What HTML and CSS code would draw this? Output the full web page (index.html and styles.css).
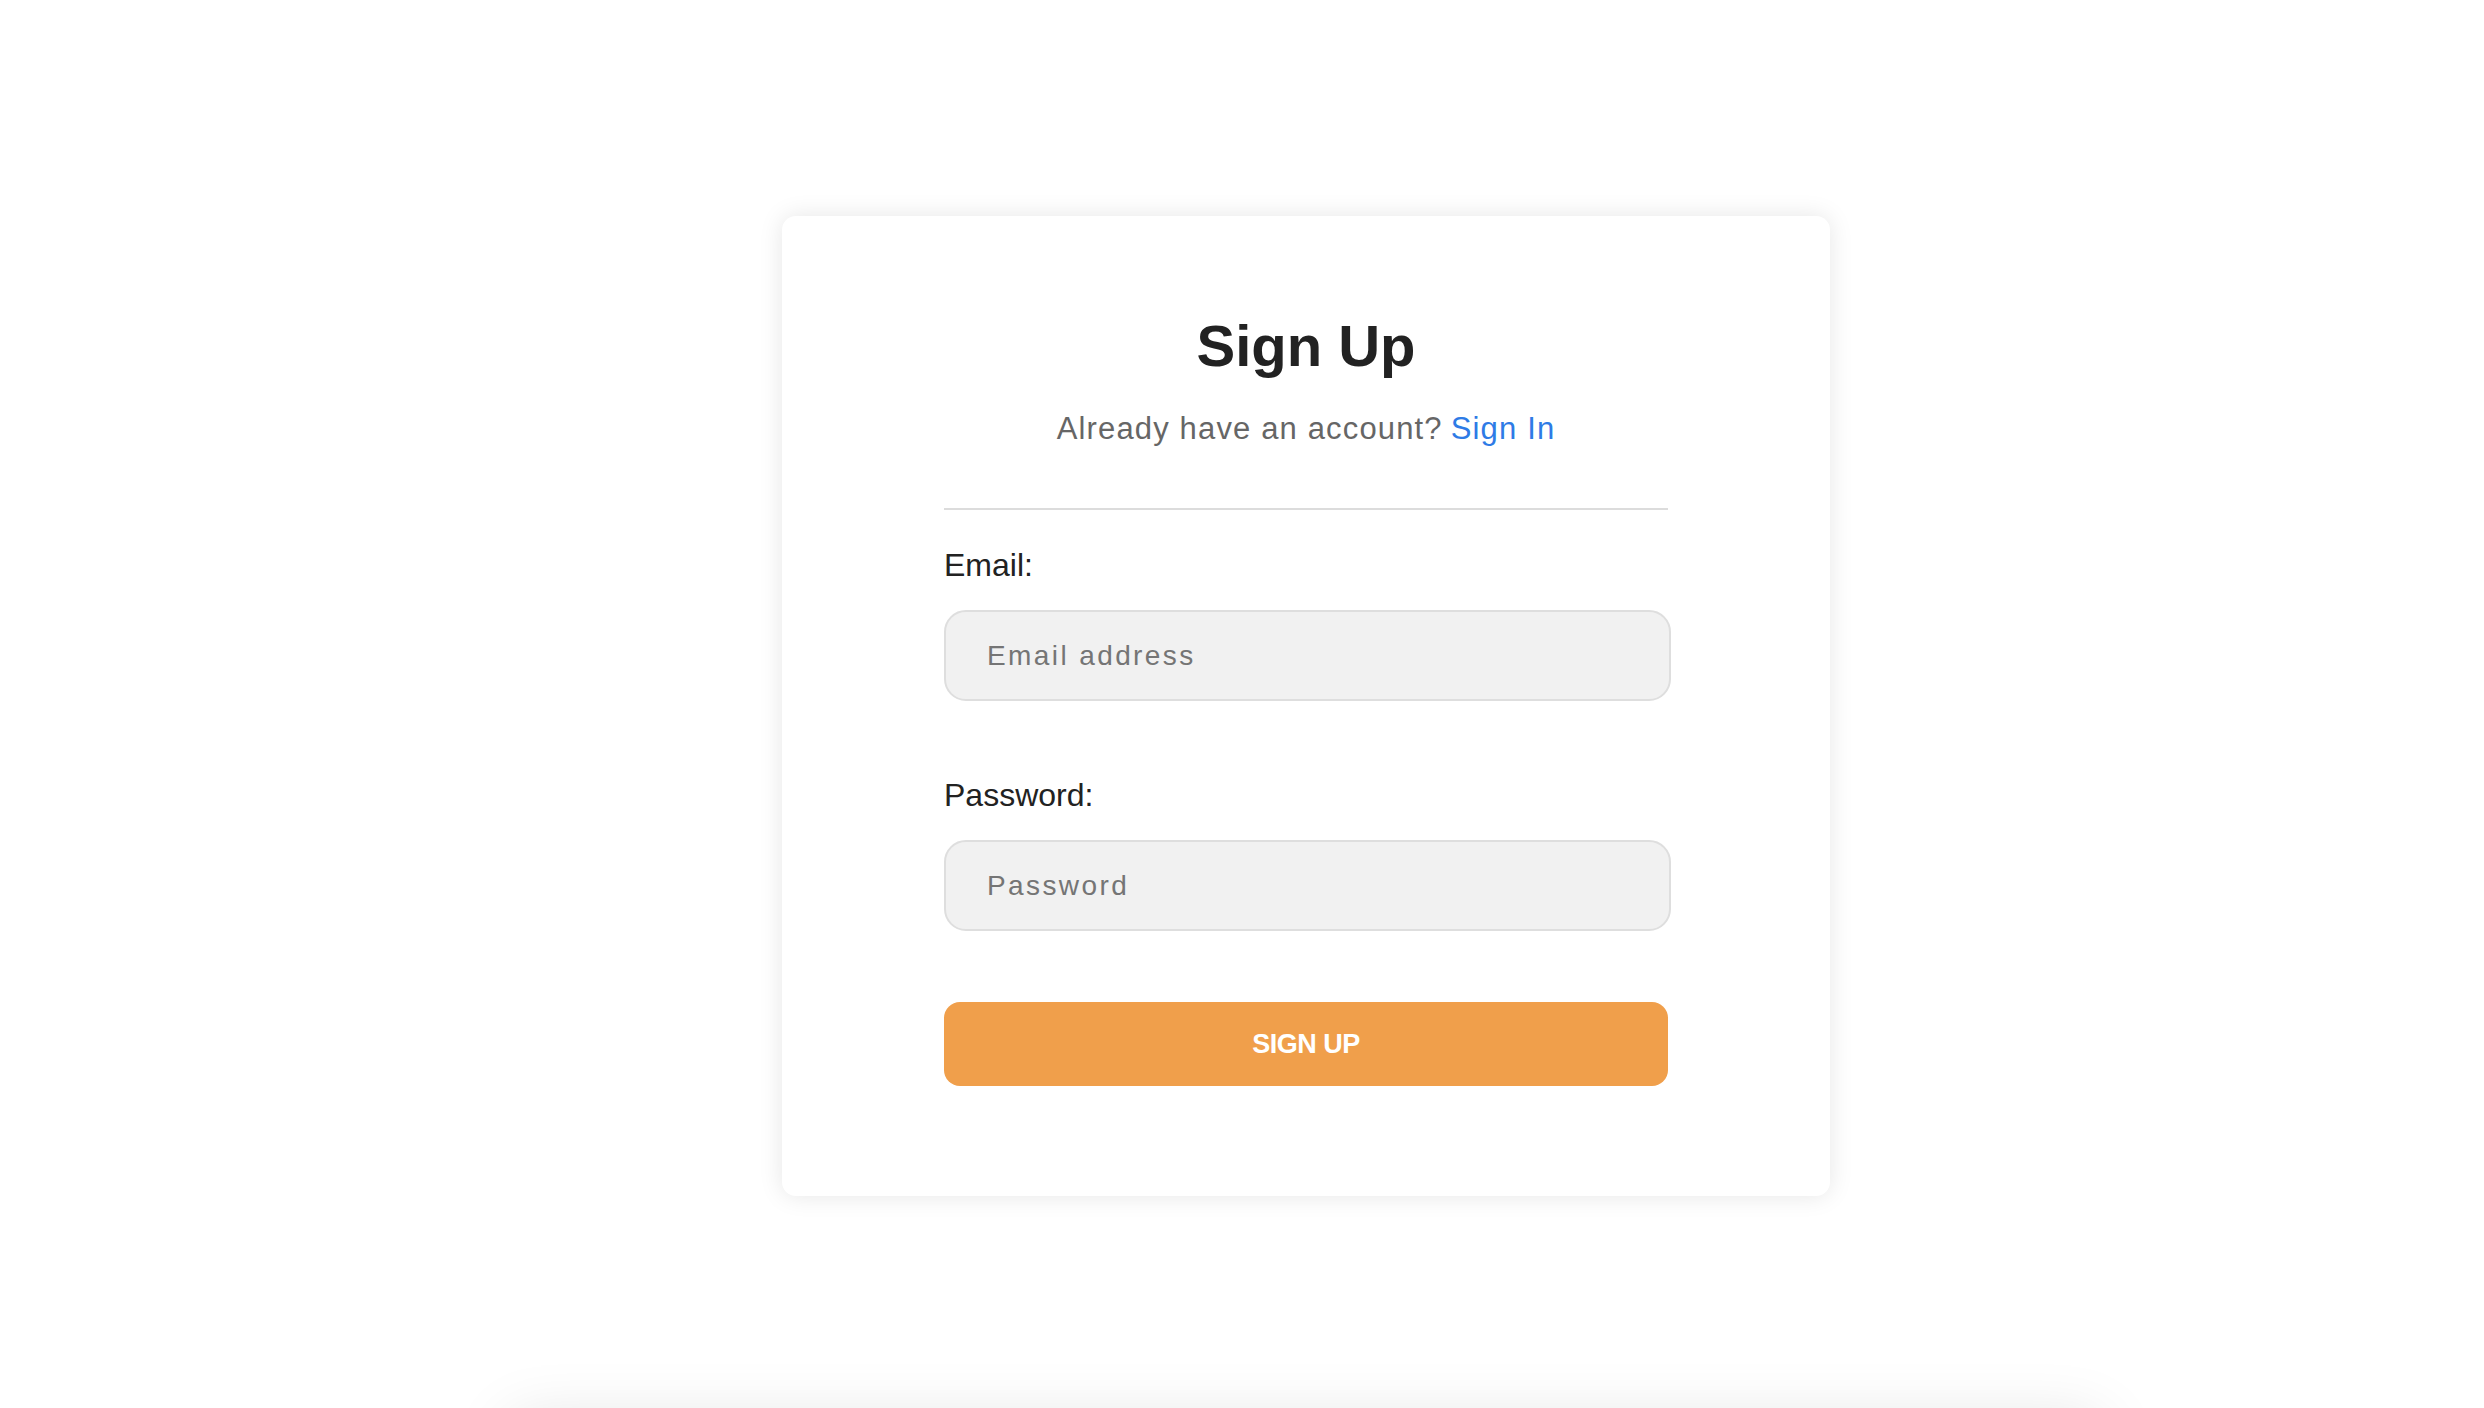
FILE: index.html
```html
<!DOCTYPE html>
<html lang="en">
<head>
<meta charset="utf-8">
<title>Sign Up</title>
<link rel="stylesheet" href="styles.css">
</head>
<body>
<div class="page">
  <main class="card">
    <h1 class="title">Sign Up</h1>
    <p class="subtitle">Already have an account?<a class="link" href="#">Sign In</a></p>
    <hr class="divider">
    <form class="form">
      <label class="label" for="email">Email:</label>
      <input class="input" id="email" type="email" placeholder="Email address">
      <label class="label label-pw" for="password">Password:</label>
      <input class="input" id="password" type="password" placeholder="Password">
      <button class="button" type="button">SIGN UP</button>
    </form>
  </main>
  <footer class="below"></footer>
</div>
</body>
</html>
```
FILE: styles.css
```css
html, body {
  margin: 0;
  padding: 0;
  background: #ffffff;
  font-family: "Liberation Sans", Arial, Helvetica, sans-serif;
}

.page {
  display: flex;
  flex-direction: column;
  align-items: center;
  padding: 216px 0 0 128px;
}

.card {
  box-sizing: border-box;
  width: 1048px;
  height: 980px;
  padding: 101px 162px 0 162px;
  background: #ffffff;
  border-radius: 14px;
  box-shadow: 0 0 24px rgba(0, 0, 0, 0.10);
  display: flex;
  flex-direction: column;
}

.title {
  margin: 0;
  font-size: 58px;
  line-height: 1;
  font-weight: bold;
  color: #222222;
  text-align: center;
}

.subtitle {
  margin: 38px 0 0 0;
  font-size: 31px;
  line-height: 1;
  letter-spacing: 1.15px;
  color: #666666;
  text-align: center;
}

.link {
  margin-left: 8px;
  color: #2e7be6;
  text-decoration: none;
}

.divider {
  margin: 64px 0 0 0;
  border: 0;
  height: 2px;
  background: #dcdcdc;
}

.form {
  display: flex;
  flex-direction: column;
}

.label {
  margin-top: 39px;
  font-size: 32px;
  line-height: 1;
  color: #222222;
}

.label-pw {
  margin-top: 78px;
}

.input {
  box-sizing: border-box;
  margin: 29px 0 0 0;
  width: 727px;
  height: 91px;
  padding: 0 0 0 41px;
  border: 2px solid #dedede;
  border-radius: 22px;
  background: #f1f1f1;
  font-family: inherit;
  font-size: 28px;
  letter-spacing: 2.4px;
  color: #333333;
  outline: none;
}

.input-pw {
  margin-top: 30px;
}

.input::placeholder {
  color: #757575;
}

.button {
  margin-top: 71px;
  width: 724px;
  height: 84px;
  border: 0;
  border-radius: 16px;
  background: #f09f4b;
  color: #ffffff;
  font-family: inherit;
  font-size: 27px;
  font-weight: bold;
  letter-spacing: -0.5px;
}

.below {
  margin-top: 225px;
  width: 1590px;
  height: 300px;
  background: #ffffff;
  box-shadow: 0 0 60px rgba(0, 0, 0, 0.12);
}
```
